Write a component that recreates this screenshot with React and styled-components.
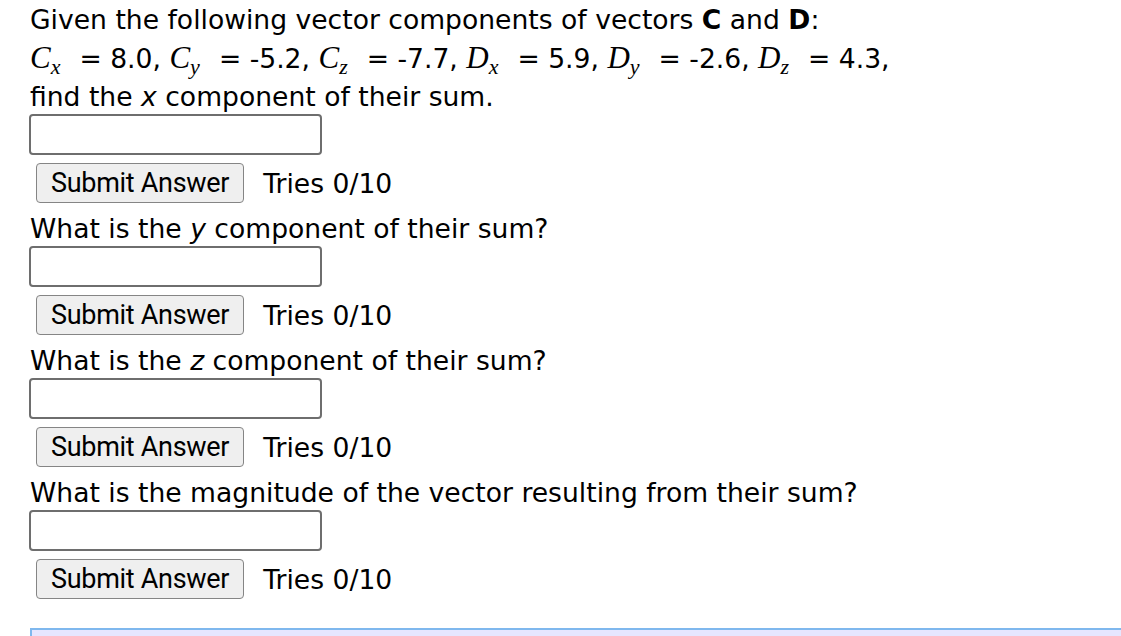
import React from "react";
import styled, { createGlobalStyle } from "styled-components";

const GlobalStyle = createGlobalStyle`
  body {
    margin: 0;
    background: #fff;
    color: #000;
    font-family: Verdana, "DejaVu Sans", sans-serif;
  }
`;

const Page = styled.div`
  padding: 1px 0 0 29px;
  overflow: hidden;
`;

const Intro = styled.p`
  margin: 0 0 0 1px;
  font-size: 26.6px;
  line-height: 38px;
  white-space: nowrap;
`;

const Question = styled.p`
  margin: 9px 0 0 1px;
  font-size: 26.6px;
  line-height: 34px;
`;

const Var = styled.i`
  font-style: italic;
`;

const Bold = styled.b`
  font-weight: bold;
`;

const MathSym = styled.span`
  font-family: "Liberation Serif", "Times New Roman", serif;
  font-style: italic;
  font-size: 31px;
`;

const Sub = styled.sub`
  font-family: "Liberation Serif", "Times New Roman", serif;
  font-style: italic;
  font-size: 22px;
  line-height: 0;
  vertical-align: -6px;
  margin-right: 19px;
`;

const AnswerInput = styled.input`
  display: block;
  box-sizing: border-box;
  width: 293px;
  height: 41px;
  margin: ${(p) => (p.$first ? "-2px" : "0")} 0 0 0;
  border: 2px solid #6e6e6e;
  border-radius: 4px;
  background: #fff;
  font-size: 24px;
  padding: 0 8px;
`;

const SubmitRow = styled.div`
  display: flex;
  align-items: center;
  gap: 19px;
  margin: 8px 0 0 7px;
`;

const SubmitButton = styled.button`
  box-sizing: border-box;
  height: 40px;
  padding: 0 14px;
  border: 1px solid #858585;
  border-radius: 4px;
  background: #efefef;
  color: #000;
  font-family: Roboto, "Liberation Sans", Arial, sans-serif;
  font-size: 27px;
  letter-spacing: -0.3px;
`;

const Tries = styled.span`
  font-size: 26.6px;
`;

const InfoBox = styled.div`
  margin: 29px 0 0 1px;
  height: 6px;
  border: 2px solid #7fb8ee;
  border-right: none;
  border-bottom: none;
  background: #e6e6ff;
`;

const Component = ({ name, axis, value, last }) => (
  <>
    <MathSym>{name}</MathSym>
    <Sub>{axis}</Sub>= {value}
    {last ? "," : ", "}
  </>
);

const AnswerBlock = ({ first }) => (
  <>
    <AnswerInput type="text" $first={first} />
    <SubmitRow>
      <SubmitButton>Submit Answer</SubmitButton>
      <Tries>Tries 0/10</Tries>
    </SubmitRow>
  </>
);

const components = [
  { name: "C", axis: "x", value: "8.0" },
  { name: "C", axis: "y", value: "-5.2" },
  { name: "C", axis: "z", value: "-7.7" },
  { name: "D", axis: "x", value: "5.9" },
  { name: "D", axis: "y", value: "-2.6" },
  { name: "D", axis: "z", value: "4.3" },
];

export default function App() {
  return (
    <Page>
      <GlobalStyle />
      <Intro>
        Given the following vector components of vectors <Bold>C</Bold> and{" "}
        <Bold>D</Bold>:
        <br />
        {components.map((c, i) => (
          <Component key={i} {...c} last={i === components.length - 1} />
        ))}
        <br />
        find the <Var>x</Var> component of their sum.
      </Intro>
      <AnswerBlock first />
      <Question>
        What is the <Var>y</Var> component of their sum?
      </Question>
      <AnswerBlock />
      <Question>
        What is the <Var>z</Var> component of their sum?
      </Question>
      <AnswerBlock />
      <Question>What is the magnitude of the vector resulting from their sum?</Question>
      <AnswerBlock />
      <InfoBox />
    </Page>
  );
}
